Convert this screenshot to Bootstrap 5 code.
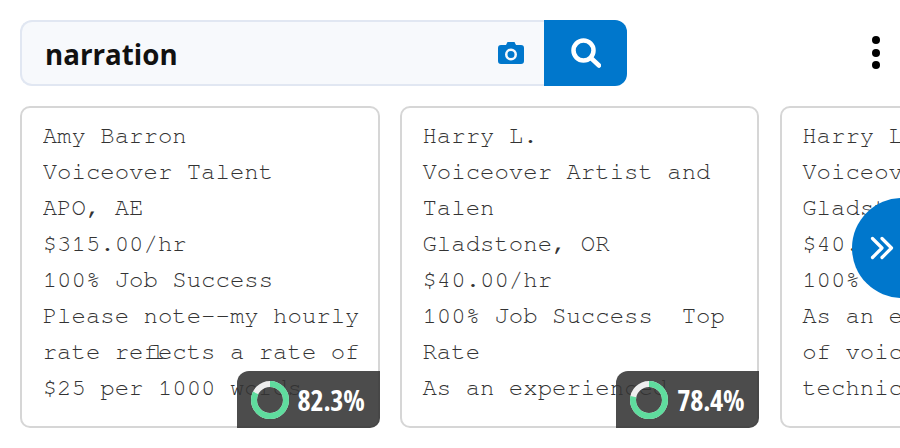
<!DOCTYPE html>
<html lang="en">
<head>
    <meta charset="UTF-8">
    <meta name="viewport" content="width=device-width, initial-scale=1.0">
    <title>Talent search</title>
    <link href="https://cdn.jsdelivr.net/npm/bootstrap@5.3.0/dist/css/bootstrap.min.css" rel="stylesheet">
    <style>
        body {
            background-color: #fff;
            overflow: hidden;
            height: 448px;
            position: relative;
        }
        .search-row {
            padding: 20px;
        }
        .search-box {
            width: 607px;
            height: 66px;
        }
        .search-field {
            background-color: #f7f9fc;
            border: 2px solid #e1e7f2;
            border-right: 0;
            border-radius: 12px 0 0 12px;
            padding: 0 20px 0 23px;
        }
        .search-text {
            font-family: "Open Sans", sans-serif;
            font-weight: 700;
            font-size: 27.700px;
            color: #111;
            padding-top: 3px;
        }
        .search-submit {
            width: 83px;
            background-color: #0077cc;
            border-radius: 0 12px 12px 0;
        }
        .menu-dots {
            gap: 4.5px;
            margin-top: -1px;
        }
        .menu-dots span {
            width: 8px;
            height: 8px;
            background-color: #000;
            border-radius: 50%;
        }
        .result-strip {
            padding-left: 20px;
            gap: 20.25px;
        }
        .result-card {
            flex: 0 0 359.5px;
            height: 322px;
            border: 2px solid #d6d6d6;
            border-radius: 10px;
            padding: 10px 0 0 20.7px;
            font-family: "Nimbus Mono PS", FreeMono, "Liberation Mono", "Courier New", monospace;
            font-size: 24px;
            line-height: 36px;
            color: #333;
            white-space: nowrap;
        }
        .card-lines {
            height: 100%;
            overflow: hidden;
        }
        /* the reference font sets "fl" as one ligature, one cell wide */
        .fl-pair {
            letter-spacing: -7.2px;
        }
        .score-tag {
            position: absolute;
            right: -2px;
            bottom: -2px;
            width: 143px;
            height: 57px;
            background-color: rgba(51, 51, 51, 0.88);
            border-radius: 12px 0 10px 0;
            padding-left: 14px;
            gap: 9px;
            color: #fff;
        }
        .score-value {
            font-family: "Open Sans", "Liberation Sans", sans-serif;
            font-stretch: condensed;
            font-weight: 700;
            font-size: 28px;
            line-height: 1;
            letter-spacing: -0.2px;
        }
        .next-btn {
            position: absolute;
            left: 852px;
            top: 198px;
            width: 100px;
            height: 100px;
            border-radius: 50%;
            background-color: #0077cc;
            padding-left: 18px;
        }
    </style>
</head>
<body>
    <div class="search-row d-flex justify-content-between align-items-center">
        <div class="search-box d-flex">
            <div class="search-field flex-grow-1 d-flex align-items-center justify-content-between">
                <span class="search-text">narration</span>
                <svg width="26" height="22" viewBox="0 0 26 22" fill="#0077cc">
                    <path fill-rule="evenodd" d="M3 3h5l1.500-3h7l1.500 3h5a3 3 0 0 1 3 3v13a3 3 0 0 1-3 3H3a3 3 0 0 1-3-3V6a3 3 0 0 1 3-3zm10 3.500a6 6 0 1 0 0 12 6 6 0 0 0 0-12zm0 2.500a3.500 3.500 0 1 1 0 7 3.500 3.500 0 0 1 0-7z"/>
                </svg>
            </div>
            <div class="search-submit d-flex align-items-center justify-content-center">
                <svg width="30" height="30" viewBox="0 0 30 30" fill="none" stroke="#fff" stroke-linecap="round" stroke-width="4.500">
                    <circle cx="12.500" cy="12.500" r="10"/>
                    <path d="M20.500 20.500l7.500 7"/>
                </svg>
            </div>
        </div>
        <div class="menu-dots d-flex flex-column align-items-center">
            <span class="d-block"></span>
            <span class="d-block"></span>
            <span class="d-block"></span>
        </div>
    </div>

    <div class="result-strip d-flex">
        <div class="result-card position-relative">
            <div class="card-lines">
                <div>Amy Barron</div>
                <div>Voiceover Talent</div>
                <div>APO, AE</div>
                <div>$315.00/hr</div>
                <div>100% Job Success</div>
                <div>Please note--my hourly</div>
                <div>rate re<span class="fl-pair">fl</span>ects a rate of</div>
                <div>$25 per 1000 words</div>
            </div>
            <div class="score-tag d-flex align-items-center">
                <svg width="38" height="38" viewBox="0 0 38 38" fill="none" stroke-width="6">
                    <circle cx="19" cy="19" r="16" stroke="#eeeeee"/>
                    <circle cx="19" cy="19" r="16" stroke="#5fdc9e" pathLength="100" stroke-dasharray="82.3 100" transform="rotate(-90 19 19)"/>
                </svg>
                <span class="score-value">82.3%</span>
            </div>
        </div>
        <div class="result-card position-relative">
            <div class="card-lines">
                <div>Harry L.</div>
                <div>Voiceover Artist and</div>
                <div>Talen</div>
                <div>Gladstone, OR</div>
                <div>$40.00/hr</div>
                <div>100% Job Success&nbsp; Top</div>
                <div>Rate</div>
                <div>As an experienced</div>
            </div>
            <div class="score-tag d-flex align-items-center">
                <svg width="38" height="38" viewBox="0 0 38 38" fill="none" stroke-width="6">
                    <circle cx="19" cy="19" r="16" stroke="#eeeeee"/>
                    <circle cx="19" cy="19" r="16" stroke="#5fdc9e" pathLength="100" stroke-dasharray="78.4 100" transform="rotate(-90 19 19)"/>
                </svg>
                <span class="score-value">78.4%</span>
            </div>
        </div>
        <div class="result-card position-relative">
            <div class="card-lines">
                <div>Harry L.</div>
                <div>Voiceover Artist</div>
                <div>Gladstone, OR</div>
                <div>$40.00/hr</div>
                <div>100% Job Success</div>
                <div>As an experienced</div>
                <div>of voice</div>
                <div>technical</div>
            </div>
        </div>
    </div>

    <div class="next-btn d-flex align-items-center">
        <svg width="24" height="24" viewBox="0 0 24 24" fill="none" stroke="#fff" stroke-width="3.200" stroke-linecap="round" stroke-linejoin="round">
            <path d="M2.500 2.500l9.500 9.500-9.500 9.500"/>
            <path d="M12 2.500l9.500 9.500-9.500 9.500"/>
        </svg>
    </div>

    <script src="https://cdn.jsdelivr.net/npm/bootstrap@5.3.0/dist/js/bootstrap.bundle.min.js"></script>
</body>
</html>
